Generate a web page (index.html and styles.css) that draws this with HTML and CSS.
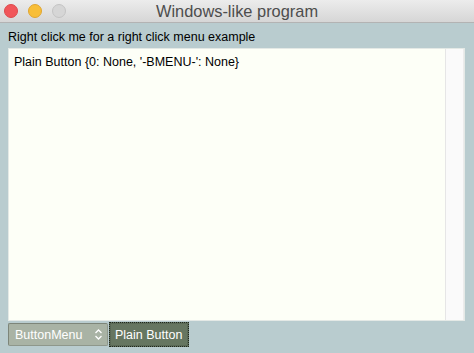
FILE: index.html
```html
<!DOCTYPE html>
<html>
<head>
<meta charset="utf-8">
<link rel="stylesheet" href="styles.css">
</head>
<body>
<div class="window">
  <div class="titlebar">
    <div class="lights">
      <span class="light red"></span>
      <span class="light yellow"></span>
      <span class="light gray"></span>
    </div>
    <div class="title">Windows-like program</div>
  </div>
  <div class="content">
    <div class="label">Right click me for a right click menu example</div>
    <div class="output">
      <div class="text">Plain Button {0: None, '-BMENU-': None}</div>
      <div class="scroll"></div>
    </div>
    <div class="buttons">
      <div class="menu-btn">
        <span>ButtonMenu</span>
        <svg class="chev" width="9" height="13" viewBox="0 0 9 13"><path d="M1.5 5 L4.5 2 L7.5 5 M1.5 8 L4.5 11 L7.5 8" fill="none" stroke="#ffffff" stroke-width="1.3"/></svg>
      </div>
      <div class="plain-btn">Plain Button</div>
    </div>
  </div>
</div>
</body>
</html>
```
FILE: styles.css
```css
html, body {
  margin: 0;
  padding: 0;
}
body {
  width: 474px;
  height: 353px;
  overflow: hidden;
  font-family: "Liberation Sans", Arial, sans-serif;
  background: #b9cccf;
}
.window {
  display: flex;
  flex-direction: column;
  height: 353px;
}
.titlebar {
  flex-shrink: 0;
  height: 23px;
  box-sizing: border-box;
  background: linear-gradient(#ececec, #d6d6d6);
  border-bottom: 1px solid #b3b3b3;
  display: flex;
  align-items: center;
  position: relative;
}
.lights {
  display: flex;
  gap: 10px;
  padding-left: 4px;
}
.light {
  width: 14px;
  height: 14px;
  border-radius: 50%;
  box-sizing: border-box;
}
.red { background: #f1565a; border: 1px solid #dd4a4c; }
.yellow { background: #f8be37; border: 1px solid #e0a530; }
.gray { background: #d6d6d6; border: 1px solid #c4c4c4; }
.title {
  position: absolute;
  left: 0;
  right: 0;
  top: 2px;
  text-align: center;
  font-size: 16.4px;
  color: #4d4d4d;
}
.content {
  flex: 1;
  display: flex;
  flex-direction: column;
  padding: 7px 9px 6px 8px;
}
.label {
  flex-shrink: 0;
  font-size: 12.5px;
  color: #000;
  height: 18px;
  line-height: 14px;
}
.output {
  flex-shrink: 0;
  height: 273px;
  display: flex;
  background: #fdfff7;
  border: 1px solid #e4e9e6;
  box-sizing: border-box;
}
.text {
  flex: 1;
  font-size: 12.5px;
  color: #000;
  padding: 5px 0 0 5px;
  line-height: 16px;
}
.scroll {
  width: 17px;
  background: #fafafa;
  border-left: 1px solid #e6e6e6;
  border-right: 1px solid #ececec;
}
.buttons {
  flex-shrink: 0;
  display: flex;
  gap: 1px;
  margin-top: 1px;
  align-items: flex-start;
}
.menu-btn {
  width: 100px;
  height: 23px;
  margin-top: 1px;
  box-sizing: border-box;
  background: #a9b3a5;
  border: 1px solid #8e978b;
  border-top-color: #7d8579;
  border-left-color: #7d8579;
  border-radius: 2px;
  color: #ffffff;
  font-size: 12.5px;
  display: flex;
  align-items: center;
  justify-content: space-between;
  padding: 0 4px 0 6px;
}
.chev { display: block; }
.plain-btn {
  width: 80px;
  height: 25px;
  box-sizing: border-box;
  background: #667661;
  border: 1px dotted #1f261d;
  outline: 1px solid #5a6956;
  outline-offset: -2px;
  color: #ffffff;
  font-size: 12.5px;
  display: flex;
  align-items: center;
  padding-left: 5px;
}
```
